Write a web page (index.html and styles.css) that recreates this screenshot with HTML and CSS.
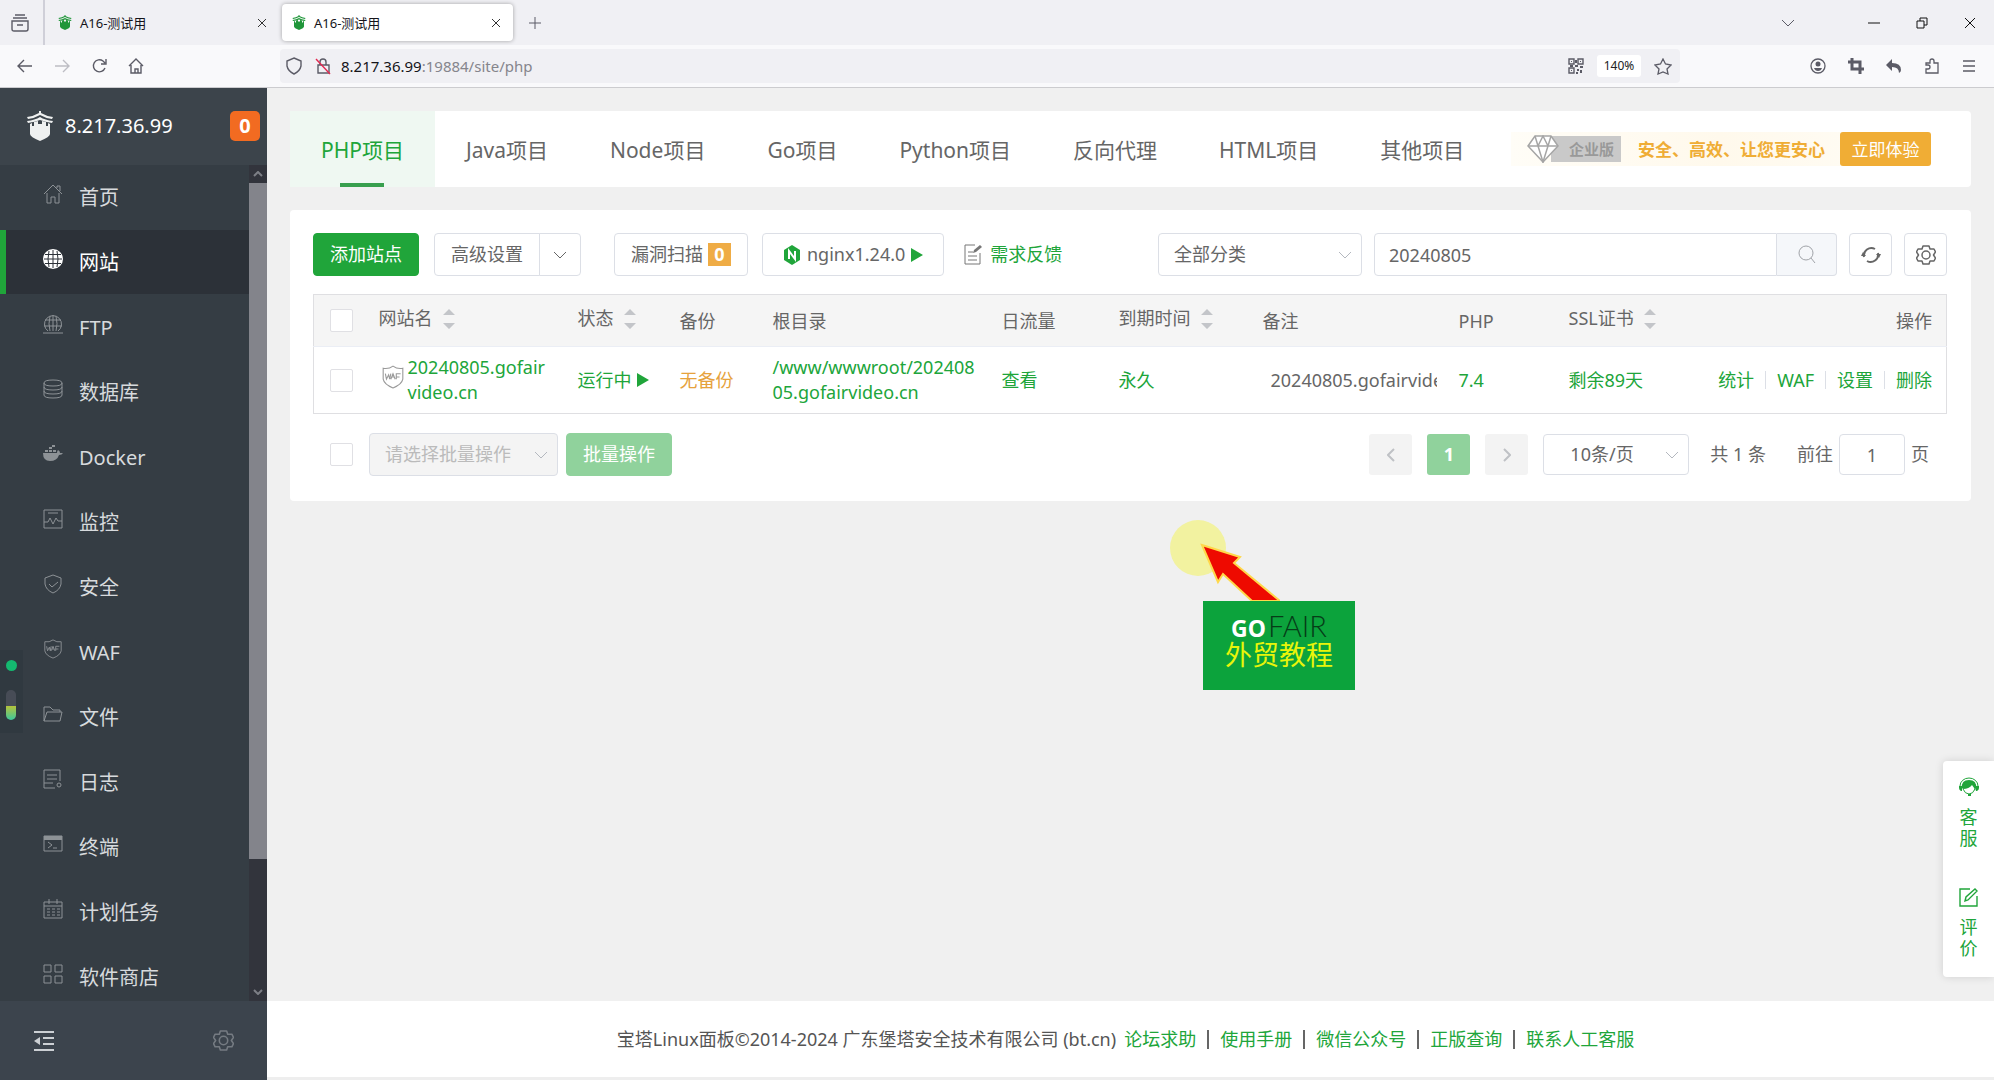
FILE: index.html
```html
<!DOCTYPE html>
<html lang="zh-CN">
<head>
  <meta charset="UTF-8" />
  <meta name="viewport" content="width=device-width, initial-scale=1" />
  <title>A16-测试用</title>
  <link rel="stylesheet" href="styles.css">
</head>
<body>

<svg class="sprite" aria-hidden="true">
  <symbol id="i-tower" viewBox="0 0 28 30">
    <path d="M13 0h2v2q5 3 12 4l-1 2q-7-1-12-4-5 3-12 4L1 6q7-1 12-4z"/>
    <path d="M14 6q5 3 13 4l-1 2q-7-1-12-3-5 2-12 3l-1-2q8-1 13-4z"/>
    <path d="M4 13l2-1v3h2v-4l4-1v3h4v-3l4 1v4h2v-3l2 1v10q0 3-10 7-10-4-10-7z"/>
  </symbol>
  <symbol id="i-down" viewBox="0 0 14 8"><path d="M1 1l6 6 6-6" fill="none" stroke="currentColor"/></symbol>
  <symbol id="i-close" viewBox="0 0 12 12"><path d="M2 2l8 8M10 2l-8 8" fill="none" stroke="currentColor"/></symbol>
  <symbol id="i-sort" viewBox="0 0 14 22"><path d="M7 1l6 6H1zM1 15h12l-6 6z" fill="#c3c5c9"/></symbol>
  <symbol id="i-play" viewBox="0 0 12 16"><path d="M0 1l12 7-12 7z" fill="#20a53a"/></symbol>
  <symbol id="i-gear" viewBox="0 0 20 20">
    <path d="M7 1h6l1 3 4 0 1.500 3-2 3 2 3-1.500 3-4 0-1 3H7l-1-3-4 0L.5 13l2-3-2-3L2 4l4 0z" fill="none" stroke="currentColor" stroke-width="1.500" stroke-linejoin="round"/>
    <circle cx="10" cy="10" r="4" fill="none" stroke="currentColor" stroke-width="1.500"/>
  </symbol>
  <symbol id="i-waf" viewBox="0 0 20 22">
    <path d="M10 1q4 3 9 2v10q-1 5-9 8-8-3-9-8V3q5 1 9-2z" fill="none" stroke="currentColor"/>
    <path d="M3 8l1 5 2-4 1 4 1-5M8 13l2-5 2 5M9 11h2M13 13V8h4M13 11h3" fill="none" stroke="currentColor"/>
  </symbol>
</svg>

<!-- Navegador -->
<div class="tabstrip">
  <button class="chrome-btn view-btn" aria-label="标签概览">
    <svg width="18" height="18" viewBox="0 0 18 18"><path d="M4 1h10M2 4h14M1 7h16v8q0 2-2 2H3q-2 0-2-2zM6 11h6" fill="none" stroke="currentColor" stroke-width="1.4"/></svg>
  </button>
  <div class="browser-tab">
    <svg class="favicon"><use href="#i-tower"/></svg><span>A16-测试用</span>
    <button class="chrome-btn tab-close" aria-label="关闭"><svg width="12" height="12"><use href="#i-close"/></svg></button>
  </div>
  <div class="browser-tab current">
    <svg class="favicon"><use href="#i-tower"/></svg><span>A16-测试用</span>
    <button class="chrome-btn tab-close" aria-label="关闭"><svg width="12" height="12"><use href="#i-close"/></svg></button>
  </div>
  <button class="chrome-btn new-tab" aria-label="新标签"><svg width="14" height="14"><path d="M7 1v12M1 7h12" stroke="currentColor"/></svg></button>
  <div class="window-btns">
    <button class="chrome-btn list-tabs" aria-label="标签列表"><svg width="14" height="8"><use href="#i-down"/></svg></button>
    <button class="chrome-btn" aria-label="最小化"><svg width="12" height="12"><path d="M0 6h12" stroke="#111"/></svg></button>
    <button class="chrome-btn" aria-label="还原"><svg width="12" height="12"><path d="M1 4h7v7H1zM4 4V1h7v7H8" fill="none" stroke="#111"/></svg></button>
    <button class="chrome-btn" aria-label="关闭窗口"><svg width="12" height="12"><path d="M1 1l10 10M11 1L1 11" stroke="#111"/></svg></button>
  </div>
</div>

<div class="navbar">
  <div class="nav-btns">
    <button class="chrome-btn" aria-label="后退"><svg width="16" height="16"><path d="M15 8H1M7 2L1 8l6 6" fill="none" stroke="currentColor" stroke-width="1.4"/></svg></button>
    <button class="chrome-btn off" aria-label="前进"><svg width="16" height="16"><path d="M1 8h14M9 2l6 6-6 6" fill="none" stroke="currentColor" stroke-width="1.4"/></svg></button>
    <button class="chrome-btn" aria-label="刷新"><svg width="16" height="16"><path d="M14 10A6 6 0 1 1 12 3l2 2M15 1v5h-5" fill="none" stroke="currentColor" stroke-width="1.4"/></svg></button>
    <button class="chrome-btn" aria-label="主页"><svg width="16" height="16"><path d="M1 8l7-7 7 7M3 7v8h10V7M7 15v-4h3v4" fill="none" stroke="currentColor" stroke-width="1.4"/></svg></button>
  </div>
  <div class="urlbar">
    <svg width="16" height="18"><path d="M8 1l7 3v5q-1 5-7 8-6-3-7-8V4z" fill="none" stroke="#5b5b66" stroke-width="1.4"/></svg>
    <svg width="16" height="18"><path d="M5 8V5q0-3 3-3t3 3v3M3 8h11v8H3z" fill="none" stroke="#5b5b66" stroke-width="1.4"/><path d="M1 2l14 15" stroke="#e22850" stroke-width="1.4"/></svg>
    <div class="url"><b>8.217.36.99</b>:19884/site/php</div>
    <svg width="16" height="16"><path d="M1 1h5v5H1zM10 1h5v5h-5zM1 10h5v5H1z" fill="none" stroke="#5b5b66" stroke-width="1.4"/><path d="M3 3h1v1H3zM12 3h1v1h-1zM3 12h1v1H3zM7 2h2v3H7zM7 7h3v2H7zM2 7h3v2H2zM12 8h3v2h-3zM9 11h2v2H9zM12 12h2v3h-2zM8 14h2v2H8z" fill="#5b5b66"/></svg>
    <span class="zoom-level">140%</span>
    <svg width="18" height="17"><path d="M9 1l2.500 5 5.500 1-4 4 1 5-5-2-5 2 1-5-4-4 5.500-1z" fill="none" stroke="#5b5b66" stroke-width="1.300"/></svg>
  </div>
  <div class="ext-btns">
    <button class="chrome-btn" aria-label="账户"><svg width="16" height="16"><circle cx="8" cy="8" r="7" fill="none" stroke="currentColor" stroke-width="1.300"/><circle cx="8" cy="6" r="2.500" fill="currentColor"/><path d="M4 10h8q-1 3-4 3t-4-3z" fill="currentColor"/></svg></button>
    <button class="chrome-btn" aria-label="截图"><svg width="16" height="16"><path d="M4 0v11h12M0 4h12v12" fill="none" stroke="currentColor" stroke-width="3"/></svg></button>
    <button class="chrome-btn" aria-label="撤销"><svg width="16" height="16"><path d="M6 1v4q9 0 9 7 0 2-2 3 0-6-7-6v4L0 7z" fill="currentColor"/></svg></button>
    <button class="chrome-btn" aria-label="扩展"><svg width="16" height="16"><path d="M2 15V11h2q2 0 2-2T4 7H2V5h4V3q0-2 2-2t2 2v2h4v10z" fill="none" stroke="currentColor" stroke-width="1.300"/></svg></button>
    <button class="chrome-btn" aria-label="菜单"><svg width="14" height="12"><path d="M1 1h12M1 6h12M1 11h12" stroke="currentColor" stroke-width="1.300"/></svg></button>
  </div>
</div>

<div class="app">
  <!-- Menú lateral -->
  <aside class="sidebar">
    <div class="side-head">
      <svg class="logo"><use href="#i-tower"/></svg>
      <span>8.217.36.99</span>
      <b class="msg-count">0</b>
    </div>
    <div class="side-body">
      <nav class="menu">
        <a href="#"><svg width="20" height="20"><path d="M1 10l9-9 9 9M14 4V2h3v5M4 9v10h4v-6h4v6h4V9" fill="none" stroke="currentColor"/></svg>首页</a>
        <a href="#" class="active"><svg width="20" height="20"><circle cx="10" cy="10" r="10" fill="#fff"/><path d="M2 5.500h16M1 10h18M2 14.500h16M6 2q-2 8 0 16M14 2q2 8 0 16M10 1v18" stroke="#2c3138" fill="none"/></svg>网站</a>
        <a href="#"><svg width="20" height="20"><path d="M5 17a8.500 8.500 0 1 1 10 0M0 19h20M2 6h16M1 12h18M7 2q-2 8 0 15M13 2q2 8 0 15M10 1v16" fill="none" stroke="currentColor"/></svg>FTP</a>
        <a href="#"><svg width="20" height="20"><path d="M1 4q0-3 9-3t9 3-9 3-9-3v12q0 3 9 3t9-3V4M1 8q0 3 9 3t9-3M1 12q0 3 9 3t9-3" fill="none" stroke="currentColor"/></svg>数据库</a>
        <a href="#"><svg width="20" height="20"><path d="M0 9h14q0-2 1-3 2 1 2 3h3q-1 2-4 2-2 6-9 6-7 0-7-8zM2 6h3v2H2zM6 6h3v2H6zM10 6h3v2h-3zM6 3h3v2H6zM9 1h3v2H9z" fill="currentColor"/></svg>Docker</a>
        <a href="#"><svg width="20" height="20"><path d="M1 1h18v18H1zM5 4h10M1 13h4l2-4 3 6 3-6 2 3h4" fill="none" stroke="currentColor"/></svg>监控</a>
        <a href="#"><svg width="20" height="20"><path d="M10 1l8 3v6q-1 6-8 9-7-3-8-9V4zM6 10l3 3 6-5" fill="none" stroke="currentColor"/></svg>安全</a>
        <a href="#"><svg width="20" height="20"><use href="#i-waf"/></svg>WAF</a>
        <a href="#"><svg width="20" height="20"><path d="M1 17V3h6l3 3h7v2M1 17L4 8h15l-2 9z" fill="none" stroke="currentColor"/></svg>文件</a>
        <a href="#"><svg width="20" height="20"><path d="M12 19H1V1h16v11M4 6h10M4 10h10M1 14h9" fill="none" stroke="currentColor"/><circle cx="16" cy="16" r="2" fill="none" stroke="currentColor"/></svg>日志</a>
        <a href="#"><svg width="20" height="20"><path d="M1 2h18v15H1zM5 8l4 3-4 3M10 14h4" fill="none" stroke="currentColor"/><path d="M1 2h18v4H1z" fill="currentColor"/></svg>终端</a>
        <a href="#"><svg width="20" height="20"><path d="M1 3h18v16H1zM1 7h18M6 0v5M14 0v5M4 10h3M9 10h3M14 10h3M4 13h3M9 13h3M14 13h3M4 16h3M9 16h3M14 16h3" fill="none" stroke="currentColor"/></svg>计划任务</a>
        <a href="#"><svg width="20" height="20"><path d="M1 1h7v7H1zM12 1h7v7h-7zM1 12h7v7H1zM12 12h7v7h-7z" fill="none" stroke="currentColor"/></svg>软件商店</a>
      </nav>
      <div class="scrollbar">
        <svg class="up" width="10" height="6"><path d="M1 5l4-4 4 4" fill="none" stroke="#7d7f86" stroke-width="2"/></svg>
        <div class="thumb"></div>
        <div class="track"></div>
        <svg class="arrow-down" width="10" height="6"><path d="M1 1l4 4 4-4" fill="none" stroke="#7d7f86" stroke-width="2"/></svg>
      </div>
    </div>
    <div class="side-foot">
      <button class="icon-btn" aria-label="收起菜单"><svg width="22" height="20"><path d="M1 1h20M10 7h11M10 13h11M1 19h20" stroke="#ccd0d4" stroke-width="2"/><path d="M1 10l6-4v8z" fill="#ccd0d4"/></svg></button>
      <button class="icon-btn set-btn" aria-label="菜单设置"><svg width="21" height="21"><use href="#i-gear"/></svg></button>
    </div>
  </aside>

  <div class="main">
    <main class="content">
      <nav class="card project-tabs">
        <a href="#" class="active">PHP项目</a>
        <a href="#">Java项目</a>
        <a href="#">Node项目</a>
        <a href="#">Go项目</a>
        <a href="#">Python项目</a>
        <a href="#">反向代理</a>
        <a href="#">HTML项目</a>
        <a href="#">其他项目</a>
        <div class="promo">
          <svg width="32" height="28" viewBox="0 0 32 28"><path d="M8 1h16l7 10-15 16L1 11z" fill="#fff" stroke="#a5a5a5" stroke-width="1.500"/><path d="M1 11h30M8 1l3 10 5 16 5-16 3-10M11 11l5-10 5 10" fill="none" stroke="#a5a5a5" stroke-width="1.500"/></svg>
          <span class="edition">企业版</span>
          <b>安全、高效、让您更安心</b>
          <button class="try-btn">立即体验</button>
        </div>
      </nav>

      <section class="card panel">
        <div class="toolbar">
          <button class="btn primary">添加站点</button>
          <div class="btn-group">
            <button class="btn">高级设置</button><button class="btn more" aria-label="更多"><svg width="14" height="8"><use href="#i-down"/></svg></button>
          </div>
          <button class="btn scan">漏洞扫描<b>0</b></button>
          <button class="btn nginx">
            <svg width="18" height="20"><path d="M9 0l8 5v10l-8 5-8-5V5z" fill="#20a53a"/><path d="M6 14V6l6 8V6" fill="none" stroke="#fff" stroke-width="2"/></svg>
            nginx1.24.0
            <svg width="12" height="16"><use href="#i-play"/></svg>
          </button>
          <a href="#" class="feedback">
            <svg width="18" height="21"><path d="M11 1H1v19h15V9M4 8h5M4 12h9M4 16h9" fill="none" stroke="#777"/><path d="M9 9l1-3 6-5 2 2-6 5z" fill="#777"/></svg>
            需求反馈
          </a>
          <div class="filters">
            <div class="select category">
              <select aria-label="分类"><option>全部分类</option></select>
              <svg width="14" height="8"><use href="#i-down"/></svg>
            </div>
            <div class="search">
              <input type="text" value="20240805" aria-label="搜索网站" />
              <button aria-label="搜索"><svg width="18" height="19"><circle cx="8" cy="8" r="7" fill="none" stroke="#a0a3a8"/><path d="M13 13l4 5" stroke="#a0a3a8"/></svg></button>
            </div>
            <button class="btn square" aria-label="刷新列表"><svg width="20" height="20"><path d="M3 12A7.500 7.500 0 0 1 14 4M17 8A7.500 7.500 0 0 1 6 16" fill="none" stroke="#666" stroke-width="2"/><path d="M0 11h5L2 7zM15 9h5l-2 4z" fill="#666"/></svg></button>
            <button class="btn square" aria-label="列表设置"><svg width="20" height="20"><use href="#i-gear"/></svg></button>
          </div>
        </div>

        <table class="sites">
          <colgroup>
            <col class="c-check"><col class="c-name"><col class="c-state"><col class="c-backup"><col class="c-root">
            <col class="c-flow"><col class="c-expire"><col class="c-note"><col class="c-php"><col>
          </colgroup>
          <thead>
            <tr>
              <th><input type="checkbox" aria-label="全选" /></th>
              <th><span class="sort">网站名<svg width="14" height="22"><use href="#i-sort"/></svg></span></th>
              <th><span class="sort">状态<svg width="14" height="22"><use href="#i-sort"/></svg></span></th>
              <th>备份</th>
              <th>根目录</th>
              <th>日流量</th>
              <th><span class="sort">到期时间<svg width="14" height="22"><use href="#i-sort"/></svg></span></th>
              <th>备注</th>
              <th>PHP</th>
              <th><div class="last"><span class="sort">SSL证书<svg width="14" height="22"><use href="#i-sort"/></svg></span><span>操作</span></div></th>
            </tr>
          </thead>
          <tbody>
            <tr>
              <td><input type="checkbox" aria-label="选择 20240805.gofairvideo.cn" /></td>
              <td><div class="site-name"><svg width="22" height="24"><use href="#i-waf"/></svg><a href="#">20240805.gofairvideo.cn</a></div></td>
              <td><a href="#" class="state">运行中<svg width="12" height="16"><use href="#i-play"/></svg></a></td>
              <td><a href="#" class="warn">无备份</a></td>
              <td><a href="#" class="path">/www/wwwroot/20240805.gofairvideo.cn</a></td>
              <td><a href="#">查看</a></td>
              <td><a href="#">永久</a></td>
              <td><input class="note" type="text" value="20240805.gofairvideo.cn" aria-label="备注" /></td>
              <td><a href="#">7.4</a></td>
              <td>
                <div class="last">
                  <a href="#">剩余89天</a>
                  <span class="ops"><a href="#">统计</a><i></i><a href="#">WAF</a><i></i><a href="#">设置</a><i></i><a href="#">删除</a></span>
                </div>
              </td>
            </tr>
          </tbody>
        </table>

        <div class="table-foot">
          <input type="checkbox" aria-label="选择全部" />
          <div class="select batch">
            <select aria-label="批量操作" disabled><option>请选择批量操作</option></select>
            <svg width="14" height="8"><use href="#i-down"/></svg>
          </div>
          <button class="btn primary" disabled>批量操作</button>
          <div class="pager">
            <button class="page" aria-label="上一页" disabled><svg width="8" height="14"><path d="M7 1L1 7l6 6" fill="none" stroke="currentColor" stroke-width="2"/></svg></button>
            <button class="page current">1</button>
            <button class="page" aria-label="下一页" disabled><svg width="8" height="14"><path d="M1 1l6 6-6 6" fill="none" stroke="currentColor" stroke-width="2"/></svg></button>
            <div class="select size">
              <select aria-label="每页条数"><option>10条/页</option></select>
              <svg width="14" height="8"><use href="#i-down"/></svg>
            </div>
            <span class="total">共 1 条</span>
            <label class="jump">前往<input type="text" value="1" />页</label>
          </div>
        </div>
      </section>
    </main>

    <footer class="footer">
      <span>宝塔Linux面板©2014-2024 广东堡塔安全技术有限公司 (bt.cn)</span>
      <a href="#">论坛求助</a><i></i><a href="#">使用手册</a><i></i><a href="#">微信公众号</a><i></i><a href="#">正版查询</a><i></i><a href="#">联系人工客服</a>
    </footer>
  </div>
</div>

<!-- Elementos flotantes -->
<div class="side-float">
  <a href="#">
    <svg width="20" height="20"><path d="M1 9a9 8 0 0 1 18 0" fill="none" stroke="#20a53a"/><path d="M3 11q-1-8 7-8t7 8l-1 3q-1-4-3-6-3 4-9 4zM0 9h3v5H2q-2-1-2-3zM17 9h3v2q0 2-2 3h-1zM9 17h3v2H9z" fill="#20a53a"/><path d="M4 12q2 5 6 5t6-5" fill="none" stroke="#20a53a"/></svg>
    <span>客服</span>
  </a>
  <a href="#">
    <svg width="20" height="20"><path d="M11 2H1v17h17V9M6 14l1-4 9-8 2 2-9 9z" fill="none" stroke="#20a53a" stroke-width="1.400"/></svg>
    <span>评价</span>
  </a>
</div>

<div class="meter"><span class="dot"></span><span class="level"></span></div>

<div class="pointer">
  <svg width="110" height="84"><circle cx="28" cy="31" r="28" fill="#f2f2a0"/><path d="M32 28l38 12-6 6 46 38H82L53 57l-5 8z" fill="#ee0a00" stroke="#ffd84a" stroke-width="2"/></svg>
  <div class="brand"><div class="brand-name"><b>GO</b><span>FAIR</span></div><div class="brand-sub">外贸教程</div></div>
</div>

</body>
</html>
```
FILE: styles.css
```css
* { box-sizing: border-box; }
body {
  margin: 0; height: 100vh; overflow: hidden;
  display: flex; flex-direction: column; position: relative;
  font-family: "Noto Sans", "Noto Sans CJK SC", sans-serif;
  font-size: 18px; line-height: 25px; color: #666; background: #f0f0f0;
}
a { color: #20a53a; text-decoration: none; }
button, input, select { font: inherit; color: inherit; margin: 0; }
button { cursor: pointer; }
svg { flex: none; display: block; }
.sprite { position: absolute; width: 0; height: 0; }

/* Navegador */
.chrome-btn {
  border: none; background: none; padding: 0; color: #5b5b66;
  display: flex; align-items: center; justify-content: center;
}
.chrome-btn.off { color: #bdbdc4; }
.tabstrip {
  flex: none; height: 45px; background: #f0f0f4; display: flex; align-items: center;
  font-size: 13px; line-height: 18px; color: #15141a;
}
.view-btn { width: 45px; height: 45px; padding-right: 3px; border-right: 2px solid #cfcfd8; }
.browser-tab {
  width: 231px; height: 37px; padding: 0 8px 0 13px; border-radius: 4px;
  display: flex; align-items: center; gap: 8px; margin-right: 6px;
}
.browser-tab.current { background: #fff; box-shadow: 0 0 4px #00000055; padding: 0 11px 0 10px; }
.favicon { width: 14px; height: 15px; fill: #20963a; }
.tab-close { margin-left: auto; color: #333; }
.new-tab { margin-left: 9px; }
.window-btns { margin-left: auto; display: flex; gap: 36px; padding-right: 18px; }
.list-tabs { margin-right: 37px; }
.navbar {
  flex: none; height: 43px; background: #f9f9fb; border-bottom: 1px solid #cccccf;
  display: flex; align-items: center;
}
.nav-btns { width: 280px; display: flex; gap: 21px; padding-left: 17px; }
.urlbar {
  flex: 1; height: 34px; background: #f0f0f4; border-radius: 4px;
  display: flex; align-items: center; gap: 13px; padding: 0 8px 0 6px;
  font-size: 15px; line-height: 20px;
}
.url { flex: 1; color: #85858c; margin-left: -3px; }
.url b { font-weight: 400; color: #15141a; }
.zoom-level {
  background: #fff; color: #222; font-size: 12px; line-height: 22px; width: 44px;
  text-align: center; border-radius: 3px;
}
.ext-btns { width: 314px; display: flex; justify-content: flex-end; gap: 22px; padding-right: 18px; }

.app { flex: 1; min-height: 0; display: flex; }

/* Menú lateral */
.sidebar { width: 267px; flex: none; display: flex; flex-direction: column; background: #353d44; }
.side-head {
  height: 77px; flex: none; display: flex; align-items: center; padding: 0 7px 2px 26px;
  background: #3c444b; color: #fff; font-size: 20px;
}
.logo { width: 28px; height: 30px; fill: #eef0f0; margin-right: 11px; }
.msg-count {
  margin-left: auto; width: 30px; height: 30px; line-height: 30px; text-align: center;
  background: #f26b21; border-radius: 5px;
}
.side-body { flex: 1; min-height: 0; display: flex; }
.menu { flex: 1; overflow: hidden; }
.menu a {
  display: flex; align-items: center; gap: 16px; height: 64px; margin-bottom: 1px;
  padding-left: 37px; border-left: 6px solid transparent; color: #d7dadd; font-size: 20px;
}
.menu svg { color: #8d9296; margin-bottom: 6px; }
.menu a.active { background: #2c3138; border-left-color: #20a53a; color: #fff; }
.scrollbar { width: 18px; display: flex; flex-direction: column; align-items: center; background: #32343c; }
.up, .arrow-down { margin: 6px 0; }
.thumb { flex: 678; width: 100%; background: #83848b; }
.track { flex: 124; }
.side-foot {
  height: 79px; flex: none; background: #3c444d; color: #757b82;
  display: flex; align-items: center; justify-content: space-between; padding: 0 33px;
}
.icon-btn { border: none; background: none; padding: 0; color: inherit; }

/* Contenido */
.main { flex: 1; min-width: 0; display: flex; flex-direction: column; border-bottom: 3px solid #eee; }
.content { flex: 1; padding: 23px; }
.card { background: #fff; border-radius: 4px; }
.project-tabs { display: flex; align-items: center; height: 76px; margin-bottom: 23px; padding-right: 40px; }
.project-tabs > a {
  height: 76px; line-height: 78px; padding: 0 31px; font-size: 21px; color: #666;
  position: relative; white-space: nowrap;
}
.project-tabs > a.active { background: #eff8f2; color: #20a53a; }
.project-tabs > a.active::after {
  content: ""; position: absolute; left: 50%; bottom: 0; width: 44px; height: 4px;
  margin-left: -22px; background: #389f4e;
}
.promo {
  margin-left: auto; display: flex; align-items: center; padding-left: 16px; white-space: nowrap;
  background: linear-gradient(90deg, #fffdf7, #fff9ec, #fffdf7); color: #efad35; font-size: 17px;
}
.edition {
  background: #c9c9c9; color: #999; font-size: 15px; font-weight: 700; line-height: 26px;
  padding: 0 7px 0 18px; margin-left: -8px;
}
.promo svg { position: relative; }
.promo b { margin: 0 15px 0 17px; }
.try-btn {
  width: 91px; height: 34px; padding: 0; border: none; border-radius: 3px;
  background: #f0ad35; color: #fff;
}
.panel { padding: 23px 24px 25px 23px; }

.btn {
  height: 43px; padding: 0 16px; border: 1px solid #dcdfe6; border-radius: 4px; background: #fff;
  display: flex; align-items: center; justify-content: center; white-space: nowrap;
}
.btn.primary { background: #20a53a; border-color: #20a53a; color: #fff; }
.btn.primary:disabled { background: #90d29c; border-color: #90d29c; }
.btn.square { width: 43px; padding: 0; }
.toolbar { display: flex; align-items: center; margin-bottom: 18px; }
.btn-group { display: flex; margin: 0 33px 0 15px; }
.btn-group .btn { border-radius: 4px 0 0 4px; }
.btn-group .more { width: 42px; padding: 0; margin-left: -1px; border-radius: 0 4px 4px 0; }
.scan b { background: #efac45; color: #fff; line-height: 23px; width: 23px; margin-left: 5px; }
.nginx { margin: 0 20px 0 14px; padding: 0 20px; gap: 6px; }
.feedback { display: flex; align-items: center; gap: 8px; white-space: nowrap; }
.filters { margin-left: auto; display: flex; gap: 12px; }

.select { position: relative; }
.select select {
  appearance: none; width: 100%; height: 43px; padding: 0 15px; border: 1px solid #dcdfe6;
  border-radius: 4px; background: #fff;
}
.select svg { position: absolute; right: 10px; top: 50%; margin-top: -4px; color: #b4b8bf; pointer-events: none; }
.select select:disabled { background: #f4f4f4; color: #bbb; opacity: 1; }
.category { width: 204px; }
.batch { width: 189px; margin: 0 8px 0 16px; }
.size { width: 146px; }
.size select { height: 41px; padding: 0 26px; }
.search { display: flex; width: 463px; }
.search input {
  flex: 1; min-width: 0; height: 43px; padding: 0 14px; border: 1px solid #dcdfe6;
  border-radius: 4px 0 0 4px; background: #fff;
}
.search button {
  width: 60px; padding: 0; border: 1px solid #dcdfe6; border-left: none; border-radius: 0 4px 4px 0;
  background: #f5f7fa; display: flex; align-items: center; justify-content: center;
}

input[type="checkbox"] {
  appearance: none; width: 23px; height: 23px; border: 1px solid #e0e0e4; border-radius: 2px;
  background: #fff; display: block;
}
.sites { width: 100%; table-layout: fixed; border-collapse: collapse; border: 1px solid #dfdfe2; }
.sites th { height: 52px; padding: 2px 14px 0; background: #f5f5f5; font-weight: 400; text-align: left; }
.sites td { height: 67px; padding: 0 14px; border-top: 1px solid #ebeef5; }
.sites th:first-child, .sites td:first-child { padding: 0 0 0 16px; }
.c-check { width: 51px; }
.c-name { width: 199px; }
.c-state { width: 102px; }
.c-backup { width: 93px; }
.c-root { width: 229px; }
.c-flow { width: 117px; }
.c-expire { width: 144px; }
.c-note { width: 196px; }
.c-php { width: 110px; }
.sort { display: inline-flex; align-items: center; gap: 9px; white-space: nowrap; padding-bottom: 6px; }
.site-name { display: flex; align-items: center; gap: 4px; padding-left: 3px; color: #999; }
.site-name svg { margin-bottom: 6px; }
.site-name a, .path { word-break: break-all; }
.path { display: block; margin-right: -14px; padding-right: 10px; }
.state { display: flex; align-items: center; gap: 5px; white-space: nowrap; margin-right: -14px; }
.warn { color: #e6a23c; white-space: nowrap; }
.note { width: 174px; border: none; background: none; padding: 0 0 0 8px; display: block; outline: none; }
.last { display: flex; align-items: center; justify-content: space-between; }
.ops, .footer { display: flex; align-items: center; }
.ops i { width: 1px; height: 18px; margin: 0 11px; background: #dcdfe6; }

.table-foot { display: flex; align-items: center; padding: 0 18px 0 17px; margin-top: 19px; }
.pager { margin-left: auto; display: flex; align-items: center; gap: 15px; }
.page {
  width: 43px; height: 41px; padding: 0; border: none; border-radius: 3px; background: #f3f3f3;
  color: #bfc1c5; display: flex; align-items: center; justify-content: center;
}
.page.current { background: #90d29c; color: #fff; font-weight: 700; }
.total { margin: 0 12px 0 6px; }
.jump { display: flex; align-items: center; gap: 6px; }
.jump input { width: 66px; height: 41px; padding: 0; border: 1px solid #dcdfe6; border-radius: 4px; text-align: center; }
.size + .total { margin-right: 16px; }

.footer { height: 76px; flex: none; justify-content: center; background: #fff; white-space: nowrap; padding-right: 10px; }
.footer span { margin-right: 8px; color: #555; }
.footer i { width: 2px; height: 19px; margin: 0 11px; background: #666; }

/* Flotantes */
.side-float {
  position: absolute; right: 0; top: 761px; width: 51px; padding: 16px 0 18px;
  background: #fff; border-radius: 4px 0 0 4px; box-shadow: 0 0 8px #00000022;
  display: flex; flex-direction: column; align-items: center; gap: 38px;
}
.side-float a { display: flex; flex-direction: column; align-items: center; gap: 10px; }
.side-float span { width: 18px; line-height: 21px; }
.meter {
  position: absolute; left: 0; top: 650px; width: 23px; height: 83px; padding: 10px 0 13px 6px;
  background: #303940; display: flex; flex-direction: column; justify-content: space-between;
}
.dot { width: 11px; height: 11px; border-radius: 50%; background: #14b970; }
.level {
  width: 10px; height: 30px; border-radius: 5px;
  background: linear-gradient(#474c56 0 16px, #b5c33c 16px, #3cc79c 30px);
}
.pointer { position: absolute; left: 1170px; top: 517px; }
.brand {
  width: 152px; height: 89px; margin-left: 33px; padding-top: 10px; background: #0ca33c;
  display: flex; flex-direction: column; align-items: center;
}
.brand-name { display: flex; align-items: baseline; gap: 2px; line-height: 30px; color: #fff; font-size: 23px; }
.brand-name span { font-family: Lato, sans-serif; font-weight: 300; font-size: 29px; color: #063d18; }
.brand-sub { font-size: 27px; line-height: 24px; color: #e9f50a; }
```
